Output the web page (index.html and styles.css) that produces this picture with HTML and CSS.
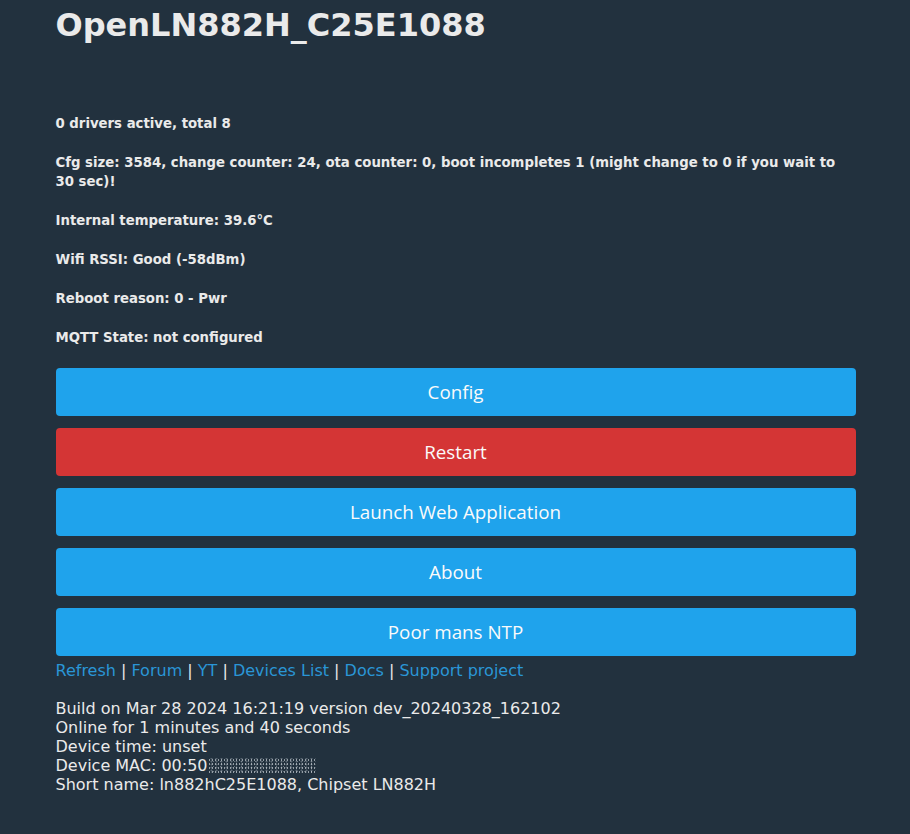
FILE: index.html
```html
<!DOCTYPE html>
<html lang="en">
<head>
    <meta charset="UTF-8">
    <meta name="viewport" content="width=device-width, initial-scale=1.0">
    <title>OpenLN882H_C25E1088</title>
    <link rel="stylesheet" href="styles.css">
</head>
<body>
    <div class="main">
        <h1 class="title">OpenLN882H_C25E1088</h1>

        <div class="state">
            <h5>0 drivers active, total 8</h5>
            <h5>Cfg size: 3584, change counter: 24, ota counter: 0, boot incompletes 1 (might change to 0 if you wait to 30 sec)!</h5>
            <h5>Internal temperature: 39.6°C</h5>
            <h5>Wifi RSSI: Good (-58dBm)</h5>
            <h5>Reboot reason: 0 - Pwr</h5>
            <h5>MQTT State: not configured</h5>
        </div>

        <div class="buttons">
            <button class="btn">Config</button>
            <button class="btn btn-red">Restart</button>
            <button class="btn">Launch Web Application</button>
            <button class="btn">About</button>
            <button class="btn">Poor mans NTP</button>
        </div>

        <div class="links">
            <a href="#">Refresh</a> | <a href="#">Forum</a> | <a href="#">YT</a> | <a href="#">Devices List</a> | <a href="#">Docs</a> | <a href="#">Support project</a>
        </div>

        <div class="info">
            Build on Mar 28 2024 16:21:19 version dev_20240328_162102<br>
            Online for 1 minutes and 40 seconds<br>
            Device time: unset<br>
            Device MAC: 00:50<span class="masked"></span><br>
            Short name: ln882hC25E1088, Chipset LN882H
        </div>
    </div>
</body>
</html>
```

FILE: styles.css
```css
body {
    margin: 0;
    background-color: #22313e;
    color: #eaeaea;
    font-family: "DejaVu Sans", Verdana, sans-serif;
    font-size: 16px;
}

.main {
    width: 800px;
    margin: 0 auto;
    padding-left: 1px;
}

.title {
    font-size: 32px;
    font-weight: bold;
    margin: 6px 0 0;
}

.state {
    margin-top: 71px;
}

.state h5 {
    font-size: 13.28px;
    font-weight: bold;
    line-height: 18.5px;
    margin: 0 0 20.5px;
}

.buttons {
    display: flex;
    flex-direction: column;
    gap: 12px;
    margin-top: 20px;
}

.btn {
    display: block;
    width: 100%;
    height: 48px;
    border: 0;
    border-radius: 4px;
    background-color: #1fa3ec;
    color: #fafafa;
    font-family: "Open Sans", "Noto Sans", sans-serif;
    font-size: 18.8px;
    cursor: pointer;
}

.btn-red {
    background-color: #d43535;
}

.links {
    margin-top: 5.5px;
    line-height: 19px;
}

.links a {
    color: #2a96d6;
    text-decoration: none;
}

.info {
    margin-top: 19px;
    line-height: 19px;
}

.masked {
    display: inline-block;
    width: 108px;
    height: 15px;
    vertical-align: -2px;
    background-image:
        radial-gradient(circle, rgba(225, 230, 235, 0.6) 0.7px, transparent 1.1px),
        radial-gradient(circle, rgba(160, 170, 180, 0.45) 0.8px, transparent 1.2px),
        radial-gradient(circle, rgba(200, 205, 210, 0.4) 0.6px, transparent 1px);
    background-size: 3px 4px, 5px 3px, 7px 5px;
    background-position: 0 0, 1px 2px, 2px 1px;
}
```
